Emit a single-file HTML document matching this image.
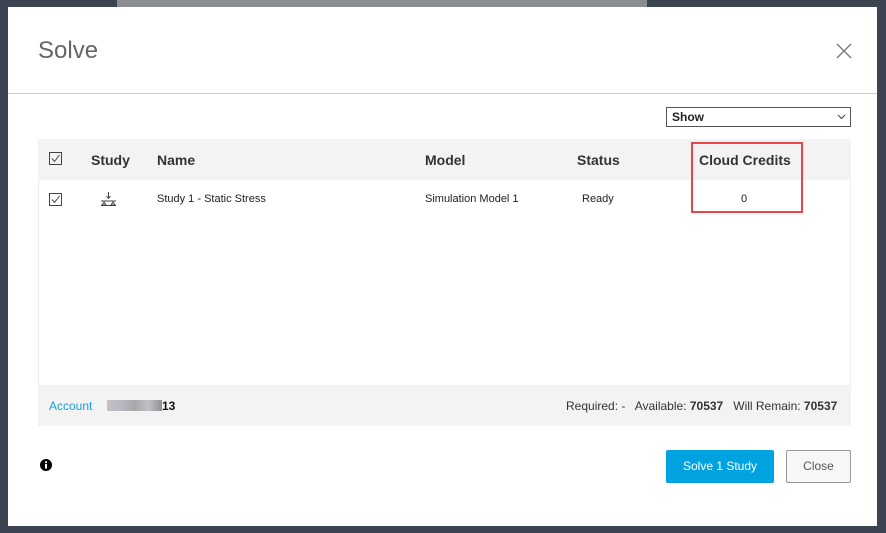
<!DOCTYPE html>
<html><head><style>
body{margin:0;width:886px;height:533px;background:#3d4451;position:relative;overflow:hidden;font-family:"Liberation Sans",Arial,sans-serif;color:#333}
.top{position:absolute;left:117px;top:0;width:530px;height:7px;background:#8a8d92}
.dlg{position:absolute;left:8px;top:7px;width:869px;height:519px;background:#fff}
.abs{position:absolute}
.title{left:30px;top:30px;font-size:24px;color:#666}
.hr{left:0;top:86px;width:869px;height:1px;background:#ccc}
.sel{left:658px;top:100px;width:185px;height:20px;border:1px solid #555;font-size:12px;font-weight:bold;line-height:18px;box-sizing:border-box;padding-left:5px;color:#222}
.tbl{left:30px;top:132px;width:813px;height:286px;background:#fff;border:1px solid #eee;box-sizing:border-box}
.th{left:30px;top:132px;width:813px;height:41px;background:#f3f3f3}
.tf{left:30px;top:378px;width:813px;height:41px;background:#f3f3f3}
.h{font-size:14px;font-weight:bold;color:#333;top:145px}
.c{font-size:11px;color:#222;top:186px}
.cb{width:13px;height:13px;border:1px solid #444;box-sizing:border-box}
.red{left:683px;top:135px;width:112px;height:71px;border:2px solid #e8454a;box-sizing:border-box}
.btn{top:443px;height:33px;font-size:12px;line-height:33px;text-align:center;border-radius:2px;box-sizing:border-box}
</style></head><body>
<div class="top"></div>
<div class="dlg">
<div class="abs title">Solve</div>
<svg class="abs" style="left:828px;top:36px" width="16" height="16"><path d="M1 1L15 15M15 1L1 15" stroke="#777" stroke-width="1.3"/></svg>
<div class="abs hr"></div>
<div class="abs sel">Show<svg style="position:absolute;right:4px;top:6px" width="9" height="6"><path d="M1 1L4.5 4.5L8 1" stroke="#444" fill="none"/></svg></div>
<div class="abs tbl"></div>
<div class="abs th"></div>
<div class="abs tf"></div>
<div class="abs cb" style="left:41px;top:145px"><svg width="11" height="11" style="display:block"><path d="M2 5.5L4.5 8.5L9.5 2" stroke="#444" fill="none"/></svg></div>
<div class="abs h" style="left:83px">Study</div>
<div class="abs h" style="left:149px">Name</div>
<div class="abs h" style="left:417px">Model</div>
<div class="abs h" style="left:569px">Status</div>
<div class="abs h" style="left:691px">Cloud Credits</div>
<div class="abs cb" style="left:41px;top:186px"><svg width="11" height="11" style="display:block"><path d="M2 5.5L4.5 8.5L9.5 2" stroke="#444" fill="none"/></svg></div>
<svg class="abs" style="left:92px;top:185px" width="17" height="16"><path d="M8.5 0V6M6.5 4L8.5 6.5L10.5 4M1 9H16M4 10L2 13H6ZM13 10L11 13H15ZM1 13.5H16" stroke="#444" fill="none" stroke-width="1"/></svg>
<div class="abs c" style="left:149px">Study 1 - Static Stress</div>
<div class="abs c" style="left:417px">Simulation Model 1</div>
<div class="abs c" style="left:574px">Ready</div>
<div class="abs c" style="left:733px">0</div>
<div class="abs red"></div>
<div class="abs" style="left:41px;top:392px;font-size:12px;color:#1b9fd9">Account</div>
<div class="abs" style="left:99px;top:393px;width:55px;height:11px;background:linear-gradient(90deg,#c8c0c0,#b8b8c8,#a8a8a8,#c0c0c8,#909090)"></div>
<div class="abs" style="left:154px;top:392px;font-size:12px;font-weight:bold;color:#111">13</div>
<div class="abs" style="left:558px;top:392px;font-size:12px;color:#333;white-space:pre">Required: -   Available: <b>70537</b>   Will Remain: <b>70537</b></div>
<svg class="abs" style="left:32px;top:452px" width="12" height="12"><circle cx="6" cy="6" r="6" fill="#000"/><rect x="5" y="5" width="2" height="4.5" fill="#fff"/><circle cx="6" cy="3.2" r="1.1" fill="#fff"/></svg>
<div class="abs btn" style="left:658px;width:108px;background:#00a3e0;color:#fff">Solve 1 Study</div>
<div class="abs btn" style="left:778px;width:65px;background:#f7f7f7;border:1px solid #999;color:#555;line-height:31px">Close</div>
</div>
</body></html>
